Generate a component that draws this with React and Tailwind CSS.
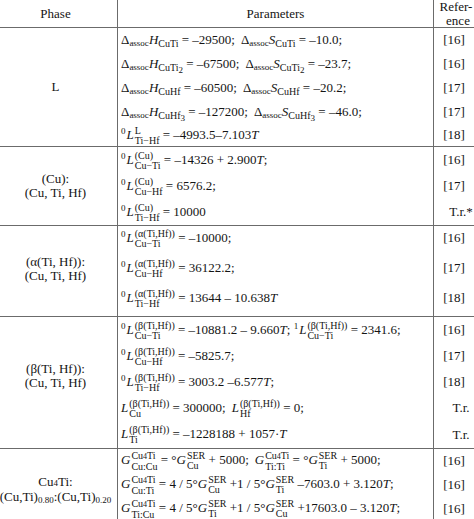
import React from 'react';

// stacked super/subscript pair, like L^(Cu)_Cu-Ti
const Stack = ({ sup, sub }) => (
  <span className="inline-flex flex-col text-[10px] leading-[11px] align-[5px] ml-[1px] not-italic">
    <span className="leading-[11px]">{sup}</span>
    <span className="leading-[10px]">{sub}</span>
  </span>
);

const Zero = ({ n = '0' }) => <sup className="text-[9px] mr-[1px]">{n}</sup>;

const Assoc = ({ v, sp, idx }) => (
  <>
    Δ<sub className="text-[9px]">assoc</sub>
    <i>{v}</i>
    <sub className="text-[10px]">
      {sp}
      {idx && <sub className="text-[9px]">{idx}</sub>}
    </sub>
  </>
);

const L = ({ n, sup, sub }) => (
  <>
    {n !== undefined && <Zero n={n} />}
    <i>L</i>
    <Stack sup={sup} sub={sub} />
  </>
);

const G = ({ deg, sup, sub }) => (
  <>
    {deg && '°'}
    <i>G</i>
    <Stack sup={sup} sub={sub} />
  </>
);

const Gap = () => <span className="inline-block w-[6px]" />;

const cu4ti = <>Cu<span className="text-[8px]">4</span>Ti</>;

const sections = [
  {
    phase: <span>L</span>,
    heights: ['h-[24px]', 'h-[24px]', 'h-[24px]', 'h-[24px]', 'h-[22px]'],
    rows: [
      [<><Assoc v="H" sp="CuTi" /> = –29500;<Gap /><Assoc v="S" sp="CuTi" /> = –10.0;</>, '[16]'],
      [<><Assoc v="H" sp="CuTi" idx="2" /> = –67500;<Gap /><Assoc v="S" sp="CuTi" idx="2" /> = –23.7;</>, '[16]'],
      [<><Assoc v="H" sp="CuHf" /> = –60500;<Gap /><Assoc v="S" sp="CuHf" /> = –20.2;</>, '[17]'],
      [<><Assoc v="H" sp="CuHf" idx="3" /> = –127200;<Gap /><Assoc v="S" sp="CuHf" idx="3" /> = –46.0;</>, '[17]'],
      [<><L n="0" sup="L" sub="Ti−Hf" /> = –4993.5–7.103<i>T</i></>, '[18]'],
    ],
  },
  {
    phase: <><span>(Cu):</span><span>(Cu, Ti, Hf)</span></>,
    heights: ['h-[26px]', 'h-[26px]', 'h-[26px]'],
    rows: [
      [<><L n="0" sup="(Cu)" sub="Cu−Ti" /> = –14326 + 2.900<i>T</i>;</>, '[16]'],
      [<><L n="0" sup="(Cu)" sub="Cu−Hf" /> = 6576.2;</>, '[17]'],
      [<><L n="0" sup="(Cu)" sub="Ti−Hf" /> = 10000</>, 'T.r.*'],
    ],
  },
  {
    phase: <><span>(α(Ti, Hf)):</span><span>(Cu, Ti, Hf)</span></>,
    heights: ['h-[30px]', 'h-[30px]', 'h-[30px]'],
    cellPad: 'pb-[6px]',
    pad: 'pb-[4px]',
    rows: [
      [<><L n="0" sup="(α(Ti,Hf))" sub="Cu−Ti" /> = –10000;</>, '[16]'],
      [<><L n="0" sup="(α(Ti,Hf))" sub="Cu−Hf" /> = 36122.2;</>, '[17]'],
      [<><L n="0" sup="(α(Ti,Hf))" sub="Ti−Hf" /> = 13644 – 10.638<i>T</i></>, '[18]'],
    ],
  },
  {
    phase: <><span>(β(Ti, Hf)):</span><span>(Cu, Ti, Hf)</span></>,
    heights: ['h-[26px]', 'h-[26px]', 'h-[26px]', 'h-[26px]', 'h-[27px]'],
    pad: 'pb-[14px]',
    rows: [
      [<><L n="0" sup="(β(Ti,Hf))" sub="Cu−Ti" /> = –10881.2 – 9.660<i>T</i>; <L n="1" sup="(β(Ti,Hf))" sub="Cu−Ti" /> = 2341.6;</>, '[16]'],
      [<><L n="0" sup="(β(Ti,Hf))" sub="Cu−Hf" /> = –5825.7;</>, '[17]'],
      [<><L n="0" sup="(β(Ti,Hf))" sub="Ti−Hf" /> = 3003.2 –6.577<i>T</i>;</>, '[18]'],
      [<><L sup="(β(Ti,Hf))" sub="Cu" /> = 300000;<Gap /><L sup="(β(Ti,Hf))" sub="Hf" /> = 0;</>, 'T.r.'],
      [<><L sup="(β(Ti,Hf))" sub="Ti" /> = –1228188 + 1057·<i>T</i></>, 'T.r.'],
    ],
  },
  {
    phase: (
      <>
        <span>Cu<span className="text-[9px]">4</span>Ti:</span>
        <span className="whitespace-nowrap">
          (Cu,Ti)<span className="text-[9px] align-[-2px]">0.80</span>:(Cu,Ti)<span className="text-[9px] align-[-2px]">0.20</span>
        </span>
      </>
    ),
    heights: ['h-[23px]', 'h-[25px]', 'h-[24px]'],
    pad: 'pt-[12px]',
    last: true,
    rows: [
      [<><G sup={cu4ti} sub="Cu:Cu" /> = <G deg sup="SER" sub="Cu" /> + 5000;<Gap /><G sup={cu4ti} sub="Ti:Ti" /> = <G deg sup="SER" sub="Ti" /> + 5000;</>, '[16]'],
      [<><G sup={cu4ti} sub="Cu:Ti" /> = 4 / 5<G deg sup="SER" sub="Cu" /> +1 / 5<G deg sup="SER" sub="Ti" /> –7603.0 + 3.120<i>T</i>;</>, '[16]'],
      [<><G sup={cu4ti} sub="Ti:Cu" /> = 4 / 5<G deg sup="SER" sub="Ti" /> +1 / 5<G deg sup="SER" sub="Cu" /> +17603.0 – 3.120<i>T</i>;</>, '[16]'],
    ],
  },
];

const RefCell = ({ text, pad }) => {
  const tr = text.startsWith('T.r');
  return (
    <div className={`w-[44px] shrink-0 flex items-center justify-center ${tr ? 'pl-[10px]' : 'pr-[4px]'} ${pad || ''}`}>
      {text}
    </div>
  );
};

const App = () => {
  return (
    <div className="w-[474px] h-[519px] overflow-hidden bg-white text-[#141414] text-[13px] leading-[14px]" style={{ fontFamily: '"Liberation Serif", "Times New Roman", serif' }}>
      <div className="ml-[-6px] w-[484px]">
        {/* header */}
        <div className="flex h-[28px] border-b border-[#6b6b6b]">
          <div className="w-[124px] shrink-0 border-r border-[#6b6b6b] flex items-center justify-center">Phase</div>
          <div className="w-[316px] shrink-0 border-r border-[#6b6b6b] flex items-center justify-center">Parameters</div>
          <div className="w-[44px] shrink-0 flex flex-col items-center justify-center text-center leading-[14px]">
            <span>Refer-</span>
            <span className="pl-[4px]">ence</span>
          </div>
        </div>

        {sections.map((s, i) => (
          <div key={i} className={`flex ${s.last ? '' : 'border-b border-[#6b6b6b]'}`}>
            <div className={`w-[124px] shrink-0 border-r border-[#6b6b6b] flex flex-col items-center justify-center text-center ${s.pad || ''}`}>
              {s.phase}
            </div>
            <div className="flex flex-col">
              {s.rows.map(([param, ref], j) => (
                <div key={j} className={`flex ${s.heights[j]}`}>
                  <div className={`w-[316px] shrink-0 border-r border-[#6b6b6b] flex items-center pl-[3px] whitespace-nowrap ${s.cellPad || ''}`}>
                    <span>{param}</span>
                  </div>
                  <RefCell text={ref} pad={s.cellPad} />
                </div>
              ))}
            </div>
          </div>
        ))}
      </div>
    </div>
  );
};

export default App;
